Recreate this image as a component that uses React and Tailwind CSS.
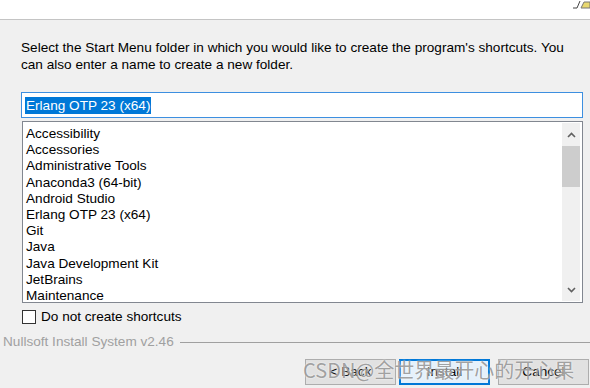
import React from 'react';

const folders = [
  'Accessibility',
  'Accessories',
  'Administrative Tools',
  'Anaconda3 (64-bit)',
  'Android Studio',
  'Erlang OTP 23 (x64)',
  'Git',
  'Java',
  'Java Development Kit',
  'JetBrains',
  'Maintenance',
];

export default function App() {
  return (
    <div className="relative flex h-[388px] w-[590px] flex-col overflow-hidden bg-[#f0f0f0] font-['Liberation_Sans',Arial,sans-serif] text-[13.6px] text-black">
      {/* header strip */}
      <div className="flex h-[20px] shrink-0 items-start justify-end border-b border-[#c4c4c4] bg-white">
        <svg width="18" height="9" viewBox="0 0 18 9">
          <path d="M1 8 L5 8 L8 1" fill="none" stroke="#444" strokeWidth="1" />
          <path d="M9 8 L12 2 L18 2 L18 8 Z" fill="#e8d870" stroke="#777" strokeWidth="1" />
        </svg>
      </div>

      <div className="flex flex-col pl-[21px] pr-[7px] pt-[19px]">
        <p className="leading-[17px]">
          Select the Start Menu folder in which you would like to create the program's shortcuts. You
          <br />
          can also enter a name to create a new folder.
        </p>

        {/* folder name input */}
        <div className="mt-[19px] flex h-[26px] items-center border border-[#3d8fe0] bg-white pl-[3px]">
          <span className="bg-[#0078d7] px-px leading-[17px] text-white">Erlang OTP 23 (x64)</span>
        </div>

        {/* folder list */}
        <div className="ml-px mt-[3px] flex h-[182px] border border-[#828790] bg-white">
          <ul className="flex-1 pl-[3px] pt-[4px]">
            {folders.map((f) => (
              <li key={f} className="h-[16.2px] leading-[16px]">{f}</li>
            ))}
          </ul>
          <div className="my-px mr-[2px] flex w-[18px] flex-col items-center bg-[#f0f0f0]">
            <div className="flex h-[23px] items-center justify-center">
              <svg width="9" height="6" viewBox="0 0 9 6">
                <path d="M1 5 L4.5 1.5 L8 5" fill="none" stroke="#606060" strokeWidth="1.6" />
              </svg>
            </div>
            <div className="h-[41px] w-[18px] bg-[#cdcdcd]" />
            <div className="flex-1" />
            <div className="flex h-[22px] items-center justify-center">
              <svg width="9" height="6" viewBox="0 0 9 6">
                <path d="M1 1 L4.5 4.5 L8 1" fill="none" stroke="#606060" strokeWidth="1.6" />
              </svg>
            </div>
          </div>
        </div>

        {/* checkbox */}
        <label className="ml-px mt-[6px] flex items-center gap-[5px]">
          <span className="h-[14px] w-[14px] border border-[#333] bg-white" />
          <span className="leading-[16px]">Do not create shortcuts</span>
        </label>
      </div>

      {/* branding line */}
      <div className="mt-[9px] flex items-center pl-[3px]">
        <span className="leading-[16px] text-[#a0a0a0]">Nullsoft Install System v2.46</span>
        <div className="ml-[6px] h-px flex-1 bg-[#a0a0a0]" />
      </div>

      {/* buttons */}
      <div className="mt-[9px] flex justify-end gap-[3px] pr-[1px]">
        <button className="h-[26px] w-[91px] border border-[#adadad] bg-[#e1e1e1]">&lt; Back</button>
        <button className="h-[26px] w-[91px] border-2 border-[#0078d7] bg-[#e5f1fb]">Install</button>
        <button className="ml-[5px] h-[26px] w-[91px] border border-[#adadad] bg-[#e1e1e1]">Cancel</button>
      </div>

      {/* watermark */}
      <div className="pointer-events-none absolute left-[303px] top-[357px] whitespace-nowrap font-['Noto_Sans_CJK_SC',sans-serif] text-[20px] leading-[26px] text-[#8a8a8a]/80 [text-shadow:0_0_2px_#ffffff]">
        CSDN@全世界最开心的开心果
      </div>
    </div>
  );
}
